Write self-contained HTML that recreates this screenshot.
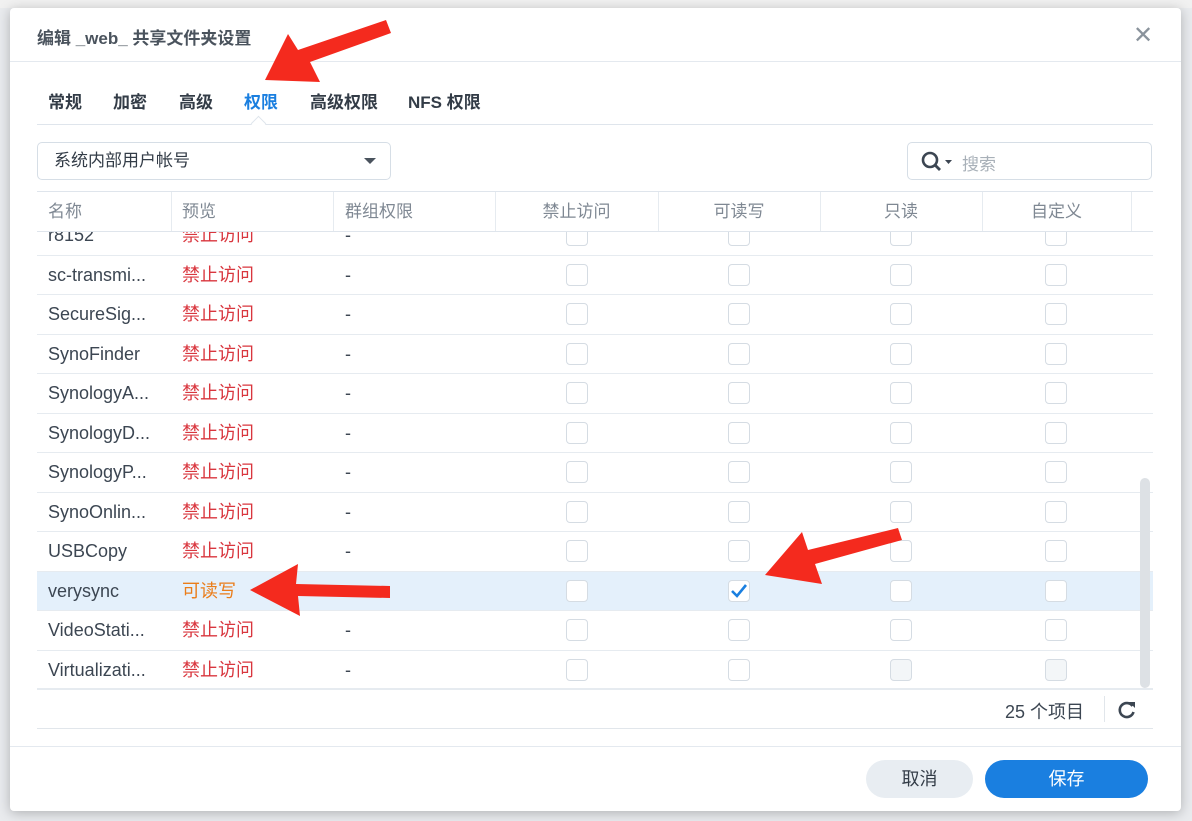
<!DOCTYPE html>
<html><head><meta charset="utf-8">
<style>
*{margin:0;padding:0;box-sizing:border-box}
body{width:1192px;height:821px;background:#e9ebee;position:relative;overflow:hidden;font-family:"Liberation Sans","Noto Sans CJK SC",sans-serif;color:#3c4652}
.a{position:absolute}
.dlg{left:10px;top:8px;width:1171px;height:803px;background:#fff;border-radius:4px;box-shadow:0 2px 12px rgba(0,0,0,.25)}
.tab{top:88px;font-size:17px;font-weight:bold;color:#333c47}
.hd{top:192px;height:39px;font-size:17px;color:#7f8893;line-height:39px}
.row{left:37px;width:1116px;height:39.5px;border-bottom:1px solid #e6ebf0;font-size:18px;line-height:38px}
.row span{position:absolute}
.cb{position:absolute;width:22px;height:22px;border:1.5px solid #d5dce3;border-radius:4px;top:8px;background:#fff}
.red{color:#d9363e}
</style></head><body>
<div class="a" style="left:0;top:0;width:1192px;height:8px;background:#f1f1f1"></div>
<div class="a dlg"></div>
<div class="a" style="left:37px;top:24px;font-size:17px;font-weight:bold;color:#4a535d">编辑 _web_ 共享文件夹设置</div>
<div class="a" style="left:1133px;top:21px;font-size:24px;color:#8a939c">✕</div>
<div class="a" style="left:10px;top:61px;width:1171px;height:1px;background:#e4e9ef"></div>
<div class="a tab" style="left:48px">常规</div>
<div class="a tab" style="left:113px">加密</div>
<div class="a tab" style="left:179px">高级</div>
<div class="a tab" style="left:244px;color:#1a7fe0">权限</div>
<div class="a tab" style="left:310px">高级权限</div>
<div class="a tab" style="left:408px">NFS 权限</div>
<div class="a" style="left:37px;top:124px;width:1116px;height:1px;background:#dfe5ec"></div>
<div class="a" style="left:253px;top:118px;width:11px;height:11px;background:#fff;border-left:1px solid #dfe5ec;border-top:1px solid #dfe5ec;transform:rotate(45deg)"></div>
<div class="a" style="left:37px;top:142px;width:354px;height:38px;border:1px solid #d6dee6;border-radius:5px;font-size:17px;line-height:36px;padding-left:16px;color:#333c47">系统内部用户帐号</div>
<div class="a" style="left:364px;top:158px;border-left:6px solid transparent;border-right:6px solid transparent;border-top:6px solid #4a535d"></div>
<div class="a" style="left:907px;top:142px;width:245px;height:38px;border:1px solid #d6dee6;border-radius:5px"></div>
<svg class="a" style="left:920px;top:150px" width="36" height="24"><circle cx="10" cy="10" r="7" fill="none" stroke="#3c4652" stroke-width="2.6"/><line x1="15" y1="15" x2="20" y2="20" stroke="#3c4652" stroke-width="2.8"/><polygon points="25,10 32,10 28.5,14" fill="#3c4652"/></svg>
<div class="a" style="left:962px;top:150px;font-size:17px;color:#a8b0b8">搜索</div>
<div class="a" style="left:37px;top:191px;width:1116px;height:1px;background:#dfe5ec"></div>
<div class="a" style="left:37px;top:231px;width:1116px;height:1px;background:#dfe5ec"></div>
<div class="a hd" style="left:48px">名称</div>
<div class="a hd" style="left:182px">预览</div>
<div class="a hd" style="left:345px">群组权限</div>
<div class="a hd" style="left:495px;width:163px;text-align:center">禁止访问</div>
<div class="a hd" style="left:658px;width:162px;text-align:center">可读写</div>
<div class="a hd" style="left:820px;width:162px;text-align:center">只读</div>
<div class="a hd" style="left:982px;width:149px;text-align:center">自定义</div>
<div class="a" style="left:171px;top:192px;width:1px;height:39px;background:#e6ebf0"></div>
<div class="a" style="left:333px;top:192px;width:1px;height:39px;background:#e6ebf0"></div>
<div class="a" style="left:495px;top:192px;width:1px;height:39px;background:#e6ebf0"></div>
<div class="a" style="left:658px;top:192px;width:1px;height:39px;background:#e6ebf0"></div>
<div class="a" style="left:820px;top:192px;width:1px;height:39px;background:#e6ebf0"></div>
<div class="a" style="left:982px;top:192px;width:1px;height:39px;background:#e6ebf0"></div>
<div class="a" style="left:1131px;top:192px;width:1px;height:39px;background:#e6ebf0"></div>
<div class="a" style="left:0;top:232px;width:1192px;height:456px;overflow:hidden">
<div class="a" style="left:0;top:-16px;width:1192px;height:600px">
<div class="a row" style="top:0"><span style="left:11px">r8152</span><span class="red" style="left:145px">禁止访问</span><span style="left:308px">-</span><i class="cb" style="left:529px"></i><i class="cb" style="left:691px"></i><i class="cb" style="left:853px"></i><i class="cb" style="left:1008px"></i></div>
<div class="a row" style="top:39.5px"><span style="left:11px">sc-transmi...</span><span class="red" style="left:145px">禁止访问</span><span style="left:308px">-</span><i class="cb" style="left:529px"></i><i class="cb" style="left:691px"></i><i class="cb" style="left:853px"></i><i class="cb" style="left:1008px"></i></div>
<div class="a row" style="top:79px"><span style="left:11px">SecureSig...</span><span class="red" style="left:145px">禁止访问</span><span style="left:308px">-</span><i class="cb" style="left:529px"></i><i class="cb" style="left:691px"></i><i class="cb" style="left:853px"></i><i class="cb" style="left:1008px"></i></div>
<div class="a row" style="top:118.5px"><span style="left:11px">SynoFinder</span><span class="red" style="left:145px">禁止访问</span><span style="left:308px">-</span><i class="cb" style="left:529px"></i><i class="cb" style="left:691px"></i><i class="cb" style="left:853px"></i><i class="cb" style="left:1008px"></i></div>
<div class="a row" style="top:158px"><span style="left:11px">SynologyA...</span><span class="red" style="left:145px">禁止访问</span><span style="left:308px">-</span><i class="cb" style="left:529px"></i><i class="cb" style="left:691px"></i><i class="cb" style="left:853px"></i><i class="cb" style="left:1008px"></i></div>
<div class="a row" style="top:197.5px"><span style="left:11px">SynologyD...</span><span class="red" style="left:145px">禁止访问</span><span style="left:308px">-</span><i class="cb" style="left:529px"></i><i class="cb" style="left:691px"></i><i class="cb" style="left:853px"></i><i class="cb" style="left:1008px"></i></div>
<div class="a row" style="top:237px"><span style="left:11px">SynologyP...</span><span class="red" style="left:145px">禁止访问</span><span style="left:308px">-</span><i class="cb" style="left:529px"></i><i class="cb" style="left:691px"></i><i class="cb" style="left:853px"></i><i class="cb" style="left:1008px"></i></div>
<div class="a row" style="top:276.5px"><span style="left:11px">SynoOnlin...</span><span class="red" style="left:145px">禁止访问</span><span style="left:308px">-</span><i class="cb" style="left:529px"></i><i class="cb" style="left:691px"></i><i class="cb" style="left:853px"></i><i class="cb" style="left:1008px"></i></div>
<div class="a row" style="top:316px"><span style="left:11px">USBCopy</span><span class="red" style="left:145px">禁止访问</span><span style="left:308px">-</span><i class="cb" style="left:529px"></i><i class="cb" style="left:691px"></i><i class="cb" style="left:853px"></i><i class="cb" style="left:1008px"></i></div>
<div class="a row" style="top:355.5px;background:#e4f0fb"><span style="left:11px">verysync</span><span style="left:145px;color:#ea7d1a">可读写</span><i class="cb" style="left:529px"></i><i class="cb" style="left:691px"><svg width="20" height="20" style="position:absolute;left:0;top:0"><polyline points="3,10 8,15 17,4" fill="none" stroke="#1a7fe0" stroke-width="2.6"/></svg></i><i class="cb" style="left:853px"></i><i class="cb" style="left:1008px"></i></div>
<div class="a row" style="top:395px"><span style="left:11px">VideoStati...</span><span class="red" style="left:145px">禁止访问</span><span style="left:308px">-</span><i class="cb" style="left:529px"></i><i class="cb" style="left:691px"></i><i class="cb" style="left:853px"></i><i class="cb" style="left:1008px"></i></div>
<div class="a row" style="top:434.5px"><span style="left:11px">Virtualizati...</span><span class="red" style="left:145px">禁止访问</span><span style="left:308px">-</span><i class="cb" style="left:529px"></i><i class="cb" style="left:691px"></i><i class="cb" style="left:853px;background:#f3f6f8"></i><i class="cb" style="left:1008px;background:#f3f6f8"></i></div>
</div></div>
<div class="a" style="left:1140px;top:478px;width:10px;height:210px;background:#dde1e5;border-radius:5px"></div>
<div class="a" style="left:37px;top:688px;width:1116px;height:2px;background:#e6ebf0"></div>
<div class="a" style="left:1005px;top:698px;font-size:18px;color:#3c4652">25 个项目</div>
<div class="a" style="left:1104px;top:696px;width:1px;height:26px;background:#e1e6eb"></div>
<svg class="a" style="left:1116px;top:699px" width="22" height="22"><path d="M16.5 7 A7 7 0 1 0 17.5 13" fill="none" stroke="#3c4652" stroke-width="2.6"/><polygon points="13,3 19,3 19,9" fill="#3c4652"/></svg>
<div class="a" style="left:37px;top:728px;width:1116px;height:1px;background:#e1e6eb"></div>
<div class="a" style="left:10px;top:746px;width:1171px;height:1px;background:#e4e9ef"></div>
<div class="a" style="left:866px;top:760px;width:107px;height:38px;border-radius:19px;background:#e8edf2;font-size:18px;text-align:center;line-height:38px;color:#333c47">取消</div>
<div class="a" style="left:985px;top:760px;width:163px;height:38px;border-radius:19px;background:#1a7fe0;font-size:18px;text-align:center;line-height:38px;color:#fff">保存</div>
<svg class="a" style="left:0;top:0" width="1192" height="821">
<g fill="#f42a1e">
<polygon points="386,20 391,33 310,62 320,82 265,80 288,34 298,50"/>
<polygon points="390,586 390,598 298,596 300,616 250,590 298,564 296,584"/>
<polygon points="898,528 902,540 815,564 822,584 765,575 802,532 808,550"/>
</g></svg>
</body></html>
